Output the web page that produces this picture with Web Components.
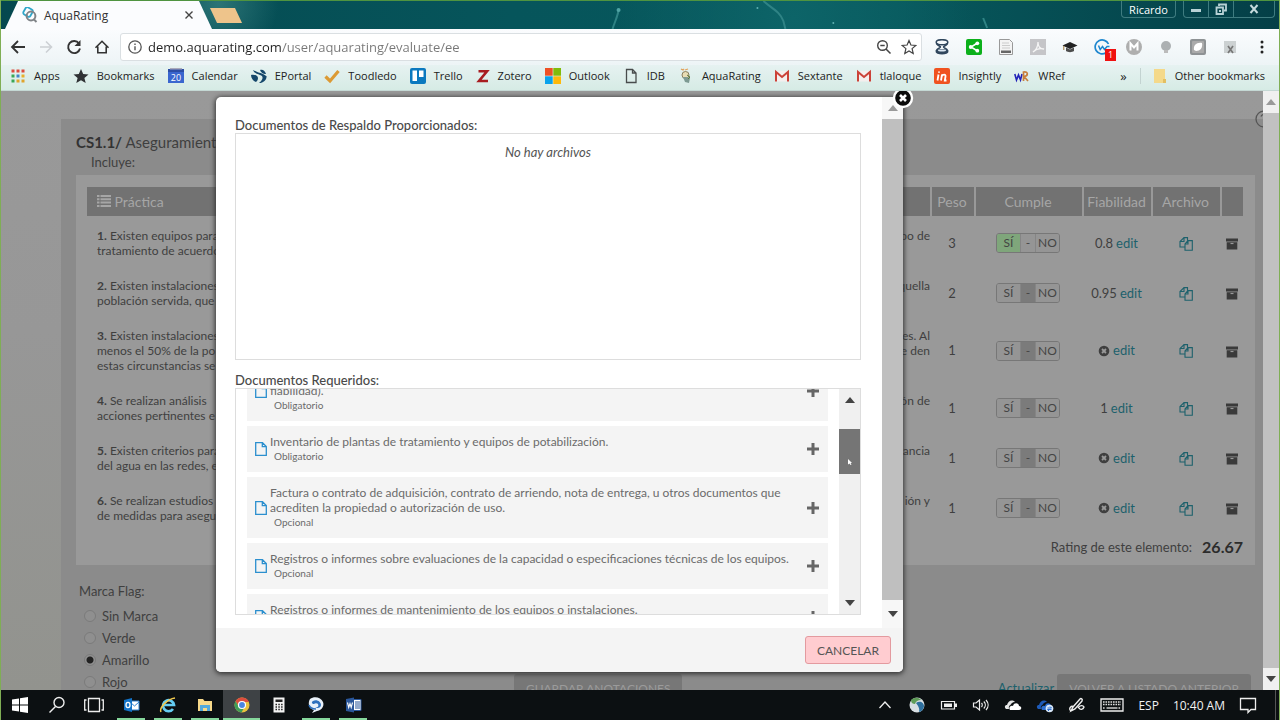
<!DOCTYPE html>
<html lang="es">
<head>
<meta charset="utf-8">
<title>AquaRating</title>
<style>
    html, body{
        width:100%;
        height:100%;
        margin:0px;
        overflow:hidden;
    }
</style>
</head>
<body>
<aqua-desktop></aqua-desktop>
<script>
(function(){

    // a bare * rule would win over the :host rules of nested elements,
    // so margins and padding are reset by tag
    const RESET = `
        *{ box-sizing:border-box; }
        h1, h2, h3, p, fieldset, legend, table, th, td, button, input{
            margin:0px;
            padding:0px;
            border:0px;
        }
        button, input{
            font:inherit;
            color:inherit;
            background:none;
        }
        a{ text-decoration:none; }
    `;

    class BaseElement extends HTMLElement{
        constructor(){
            super();
            const template = document.createElement('template');
            template.innerHTML = `<style>${RESET}${this.css()}</style>${this.html()}`;
            this.attachShadow({mode:'open'});
            this.shadowRoot.appendChild(template.content.cloneNode(true));
        }
        css(){ return ''; }
        html(){ return ''; }
    }

    /* ICONS: [viewBox, markup] */
    const ICONS = {
        aqua:['0 0 16 16','<rect x="2" y="1" width="8" height="8" rx="2" transform="rotate(30 6 5)" fill="none" stroke="#2fa6c9" stroke-width="1.8"/><circle cx="9" cy="9" r="4.4" fill="none" stroke="#808488" stroke-width="2"/><path d="M11.5 12l3 3" stroke="#808488" stroke-width="2"/>'],
        close:['0 0 16 16','<path d="M4.5 4.500l7 7M11.500 4.500l-7 7" stroke="#444" stroke-width="1.4"/>'],
        back:['0 0 16 16','<path d="M15 8H2.500M8 2L2 8l6 6" fill="none" stroke="#333" stroke-width="1.800"/>'],
        forward:['0 0 16 16','<path d="M2 8h11M8 2.500L13.500 8 8 13.500" fill="none" stroke="#ccd0d4" stroke-width="1.600"/>'],
        reload:['0 0 16 16','<path d="M13 4.500A6 6 0 1 0 14 9.500" fill="none" stroke="#333" stroke-width="1.900"/><path d="M14.500 1v6h-6z" fill="#333"/>'],
        home:['0 0 16 16','<path d="M1.500 8.800L8 2.300l6.500 6.500M3.800 7.500v6.300h8.400V7.500" fill="none" stroke="#333" stroke-width="1.600"/>'],
        info:['0 0 16 16','<circle cx="8" cy="8" r="6.200" fill="none" stroke="#555" stroke-width="1.300"/><path d="M8 7.200v4M8 4.500v1.500" stroke="#555" stroke-width="1.400"/>'],
        zoomout:['0 0 16 16','<circle cx="6.500" cy="6.500" r="4.800" fill="none" stroke="#444" stroke-width="1.400"/><path d="M4.300 6.500h4.400M10 10l4.500 4.500" stroke="#444" stroke-width="1.500"/>'],
        star:['0 0 16 16','<path d="M8 1.500l1.900 4.500 4.900.4-3.700 3.200 1.100 4.800L8 11.900l-4.200 2.500 1.100-4.800L1.200 6.400l4.900-.4z" fill="none" stroke="#444" stroke-width="1.200"/>'],
        starfill:['0 0 16 16','<path d="M8 1l2.200 5 5.300.4-4.100 3.500 1.300 5.200L8 12.200 3.300 15.100l1.300-5.200L.5 6.400 5.800 6z" fill="#2f3234"/>'],
        hourglass:['0 0 16 16','<g fill="none" stroke="#30465c" stroke-width="1.500"><ellipse cx="8" cy="3.200" rx="5.800" ry="2.500"/><path d="M2.500 4.500C4 7 6.500 7 6.500 8s-3 1-4.500 4M13.500 4.500C12 7 9.500 7 9.500 8s3 1 4.500 4"/></g><ellipse cx="8" cy="12.800" rx="6.500" ry="2.700" fill="#30465c"/><ellipse cx="8" cy="11.600" rx="4" ry="1" fill="#dbe7f2"/>'],
        share:['0 0 16 16','<rect width="16" height="16" rx="2" fill="#0cb01b"/><path d="M11.500 4L5 8l6.500 4" fill="none" stroke="#fff" stroke-width="1.500"/><g fill="#fff"><circle cx="11.300" cy="4.300" r="1.900"/><circle cx="4.700" cy="8" r="1.900"/><circle cx="11.300" cy="11.700" r="1.900"/></g>'],
        page:['0 0 16 16','<path d="M1.500.500h10l3 3v12h-13z" fill="#f4f4f4" stroke="#999"/><path d="M4 4h7M4 6.500h8M4 9h8" stroke="#ccc"/><rect x="3" y="11.500" width="10" height="2.500" fill="#666"/>'],
        pdf:['0 0 16 16','<rect width="16" height="16" fill="#c5c5c8"/><path d="M3 13c3-2 5-6 5-10 0 5 2 7 6 7-4-1-8 0-11 3z" fill="none" stroke="#f5f5f5" stroke-width="1.300"/>'],
        cap:['0 0 16 16','<path d="M.5 6.500L8 3l7.500 3.500L8 10z" fill="#222"/><path d="M4 8.500v3.500c2 1.500 6 1.500 8 0V8.500L8 10.500z" fill="#4d4d4d"/><path d="M1.800 7v4" stroke="#a07c3c"/>'],
        wchat:['0 0 16 16','<path d="M14.500 5A7 7 0 1 0 12 13.800" fill="none" stroke="#1f87cf" stroke-width="1.700"/><path d="M4.500 6.500l1.700 4L8.500 7.500l2 3L13 7.500h2.500" fill="none" stroke="#1f87cf" stroke-width="1.500"/>'],
        mcircle:['0 0 16 16','<circle cx="8" cy="8" r="8" fill="#aeaeae"/><path d="M4.500 11.500v-7L8 8.500l3.500-4v7" fill="none" stroke="#fff" stroke-width="2"/>'],
        bulb:['0 0 16 16','<circle cx="8" cy="7" r="5" fill="#acb0b2"/><path d="M6 11h4v3H6z" fill="#bbb"/>'],
        leaf:['0 0 16 16','<rect width="16" height="16" rx="2" fill="#8e9294"/><rect x="2" y="2" width="12" height="12" rx="1" fill="#aaa"/><path d="M4 11C3 6 7 3 12 4c1 5-2 8-6 8z" fill="#fff"/>'],
        xbox:['0 0 16 16','<rect x="2" y="2" width="12" height="12" fill="#ccd1d2"/><path d="M6 7l5 7M11 7l-5 7" stroke="#777" stroke-width="1.700"/>'],
        menu:['0 0 16 16','<g fill="#222"><circle cx="8" cy="3" r="1.500"/><circle cx="8" cy="8" r="1.500"/><circle cx="8" cy="13" r="1.500"/></g>'],
        apps:['0 0 16 16','<g><path d="M1.500 1.500h3v3h-3zM6.500 1.500h3v3h-3zM11.500 1.500h3v3h-3z" fill="#db4b3f"/><path d="M1.500 6.500h3v3h-3z" fill="#3aa757"/><path d="M6.500 6.500h3v3h-3z" fill="#4285c8"/><path d="M11.500 6.500h3v3h-3z" fill="#e8b02c"/><path d="M1.500 11.500h3v3h-3z" fill="#3aa757"/><path d="M6.500 11.500h3v3h-3zM11.500 11.500h3v3h-3z" fill="#e0a42c"/></g>'],
        calendar:['0 0 16 16','<path d="M0 2h16v13H0z" fill="#3a66cf"/><path d="M0 1h16v3H0z" fill="#2c4da5"/><path d="M2 0h12v1.500H2z" fill="#aab"/><text x="8" y="12.500" font-family="Open Sans, sans-serif" font-size="9" fill="#fff" text-anchor="middle">20</text>'],
        eportal:['0 0 16 16','<g fill="#15476b"><path d="M2 2c1 3 4 4 7 5 4 1 3 5-1 8 5 0 8-4 7.500-7-1 0-2-2-6-3C6 4 4 3 2 2z"/><path d="M9 2c3-1 5 1 6 4-2 .5-5-1-6-4zM0 7c2-1 7 0 7 3 0 2-1 3-2 4-3-1-5-4-5-7z"/></g>'],
        tick:['0 0 16 16','<path d="M1.500 8.500l4.500 4.500L14.500 3" fill="none" stroke="#dc9a34" stroke-width="3.200"/>'],
        trello:['0 0 16 16','<rect width="16" height="16" rx="2" fill="#0b79bf"/><path d="M2.500 2.500h4.500v10.500H2.500zM9 2.500h4.500v6.500H9z" fill="#fff"/>'],
        zotero:['0 0 14 16','<path d="M2.500 3.200h8.500L3 13h9" fill="none" stroke="#a81c20" stroke-width="2.600"/>'],
        ms:['0 0 16 16','<path d="M0 0h7.700v7.700H0z" fill="#ee5025"/><path d="M8.300 0H16v7.700H8.300z" fill="#80bb0a"/><path d="M0 8.300h7.700V16H0z" fill="#0aa2ec"/><path d="M8.300 8.300H16V16H8.300z" fill="#fdb90b"/>'],
        doc:['0 0 16 16','<path d="M3.500 1.500h6l3.500 3.500v9.500H3.500zM9.500 1.500V5H13" fill="none" stroke="#484c4c" stroke-width="1.300"/>'],
        person:['0 0 16 16','<path d="M3 1l2 1 1-1M7 2l3-1" stroke="#e3a45c" stroke-width="1.300"/><ellipse cx="7.500" cy="7" rx="3.500" ry="3.500" fill="#e8dcb4" stroke="#877c5c"/><path d="M5 9l2 5 4 1 1-5-4-1z" fill="#7d9a92"/><path d="M9 7l3 2-2 2" stroke="#5c7c3c" fill="none"/>'],
        gmail:['0 0 16 16','<path d="M1 3h14v10.500H1z" fill="#f4efee"/><path d="M2 13.500V4l6 5 6-5v9.500" fill="none" stroke="#cb4238" stroke-width="2"/>'],
        insightly:['0 0 16 16','<rect width="16" height="16" rx="2" fill="#f0521f"/><path d="M4.500 6.500l-1 6M5 3.500v1.200M7 12.500l1-6M7.700 8.500c1-2.300 4.300-2.500 3.800 0l-.7 4h1.700" fill="none" stroke="#fff" stroke-width="1.800"/>'],
        wref:['0 0 16 16','<path d="M.8 6l1.700 6L4.500 7l2 5L8 6" fill="none" stroke="#2323b8" stroke-width="1.600"/><path d="M9.500 13V4c5-1 5 4 .5 4.500l4 4.500" fill="none" stroke="#c87f3c" stroke-width="1.700"/>'],
        folder:['0 0 16 16','<path d="M2 1h11v14H2z" fill="#f4d98a"/><path d="M11 11h3v4h-3z" fill="#e3bf62"/>'],
        list:['0 0 14 12','<path d="M0 0h2.500v2H0zM3.500 0H14v2H3.500zM0 3.300h2.500v2H0zM3.500 3.300H14v2H3.500zM0 6.600h2.500v2H0zM3.500 6.600H14v2H3.500zM0 9.900h2.500v2H0zM3.500 9.900H14v2H3.500z" fill="currentColor"/>'],
        copy:['0 0 14 14','<path d="M5 3.500V.600h3.500v3M5 .600L1 4.500v5.500h4.500M1 4.500h4V.600M9 3.600h4.300v9.700H6V7zM6 7h3V3.600" fill="none" stroke="currentColor" stroke-width="1.100"/>'],
        archive:['0 0 12 12','<path d="M0 .500h12v3H0zM.700 4.200h10.600V11.500H.700z" fill="currentColor"/><path d="M4.500 5.500h3" stroke="#999" stroke-width="1.200"/>'],
        cross:['0 0 12 12','<circle cx="6" cy="6" r="5.300" fill="currentColor"/><path d="M4 4l4 4M8 4L4 8" stroke="#999" stroke-width="1.800"/>'],
        file:['0 0 12 14','<path d="M.7.700h6.800L11.300 4.500v8.800H.7zM7.300.700v4h4" fill="none" stroke="#2b8fce" stroke-width="1.300"/>'],
        plus:['0 0 12 12','<path d="M4.500 0h3v4.500H12v3H7.500V12h-3V7.500H0v-3h4.500z" fill="#666"/>'],
        badge:['0 0 22 22','<circle cx="11" cy="11" r="9" fill="#0b0b0b" stroke="#fff" stroke-width="2.400"/><path d="M8 8l6 6M14 8l-6 6" stroke="#fff" stroke-width="2.600"/>'],
        help:['0 0 18 18','<circle cx="9" cy="9" r="8" fill="none" stroke="#555" stroke-width="1.300"/><path d="M6 6.500c1-3 6-2.500 6 .5 0 2-3 2-3 4M9 13v1.500" fill="none" stroke="#555" stroke-width="1.300"/>'],
        up:['0 0 10 6','<path d="M5 0l5 6H0z" fill="currentColor"/>'],
        down:['0 0 10 6','<path d="M5 6L0 0h10z" fill="currentColor"/>'],
        cursor:['0 0 6 6','<path d="M1 0l4 4-1.500 0 1 1.500-1 .5-1-1.500-1.500 1z" fill="#fff"/>'],
        min:['0 0 16 16','<path d="M3 8h10v3H3z" fill="#b8d2d6"/>'],
        restore:['0 0 16 16','<path d="M6 5V3.500h7v6h-2M3.500 6.500h6.500v6.500H3.500z" fill="none" stroke="#b8d2d6" stroke-width="1.800"/><path d="M6 9h2v2H6z" fill="#b8d2d6"/>'],
        wclose:['0 0 16 16','<path d="M4.500 4l7 8M11.500 4l-7 8" stroke="#c4dadd" stroke-width="2"/>'],
        windows:['0 0 18 18','<path d="M1 3.500l7-1v6.100H1zM9 2.300L17 1v7.600H9zM1 9.500h7v6.100l-7-1zM9 9.500h8V17L9 15.800z" fill="#fff"/>'],
        search:['0 0 18 18','<circle cx="11" cy="6.500" r="5" fill="none" stroke="#eee" stroke-width="1.400"/><path d="M7.500 10.500L1.500 16.500" stroke="#eee" stroke-width="1.500"/>'],
        taskview:['0 0 20 18','<path d="M4.500 2.500h11v13h-11zM2.500 4H.7v10h1.800M17.500 4h1.800v10h-1.800" fill="none" stroke="#eee" stroke-width="1.300"/>'],
        outlook:['0 0 18 18','<path d="M8 5h9v9H8z" fill="#fff" stroke="#2b7fd0"/><path d="M8 6l4.500 4L17 6" fill="none" stroke="#2b7fd0"/><path d="M2 4l8-2v14l-8-2z" fill="#1273c8"/><ellipse cx="6" cy="9" rx="2" ry="2.600" fill="none" stroke="#fff" stroke-width="1.300"/>'],
        ie:['0 0 18 18','<path d="M14 13a5.500 5.500 0 1 1 1-4H5" fill="none" stroke="#65cdf3" stroke-width="2.700"/><path d="M2 16C0 12 8 3 16 2" fill="none" stroke="#f2c94d" stroke-width="1.500"/>'],
        explorer:['0 0 18 18','<path d="M2 3h5l1.500 2H16v10H2z" fill="#f7d98a"/><path d="M4 15V9h10v6h-3v-3H7v3z" fill="#52a9dc"/>'],
        chrome:['0 0 18 18','<circle cx="9" cy="9" r="7.500" fill="#e9c23d"/><path d="M2.500 5.300A7.500 7.500 0 0 1 16 6H9L6 10.500z" fill="#dc4d3e"/><path d="M2.500 5.300A7.500 7.500 0 0 0 8.500 16.500L11.500 11H6z" fill="#3f9d58"/><circle cx="9" cy="9" r="3.500" fill="#4a86e0" stroke="#fff" stroke-width="1.200"/>'],
        calc:['0 0 18 18','<path d="M3.500 1.500h11v15h-11z" fill="#f3f3f3"/><path d="M5.500 3.500h7v2.500h-7z" fill="#222"/><path d="M5.500 8.500h8M5.500 11h8M5.500 13.500h8" stroke="#222" stroke-width="1.300" stroke-dasharray="1.500 1.300"/>'],
        bird:['0 0 18 18','<path d="M3 3C7 0 14 1 16 6c2 5-3 9-6 9l-5 2 2-3C1 13 1 6 3 3z" fill="#e9f1f9"/><path d="M6 5c4-2 8 1 8 4s-4 4-6 2c3 1 4-1 3-3-1-1-3-1-4 0-2 0-3-2-1-3z" fill="#2f71bd"/><path d="M2 9c1 3 4 4 7 4" fill="none" stroke="#2f71bd" stroke-width="1.500"/>'],
        word:['0 0 18 18','<path d="M8 3.500h9v11H8z" fill="#fff" stroke="#2a5699"/><path d="M11 6h5M11 8h5M11 10h5M11 12h5" stroke="#2a5699"/><path d="M2 3l8-1.500v15L2 15z" fill="#2a5699"/><path d="M3.500 6.500L4.700 11.500 6 7.500l1.200 4L8.500 6.500" fill="none" stroke="#fff" stroke-width="1.100"/>'],
        chevron:['0 0 18 18','<path d="M3.500 12L9 6l5.500 6" fill="none" stroke="#eee" stroke-width="1.300"/>'],
        ball:['0 0 18 18','<circle cx="9" cy="9" r="7.500" fill="#d7dee2"/><path d="M3 4c3-3 8-3 10 0-3 0-5 1-6 4-2 0-4-1-4-4z" fill="#5f9c58"/><path d="M8 7c4-3 8 0 8 3s-3 6-5 6c1-4-1-6-3-9z" fill="#2e6f9e"/>'],
        battery:['0 0 18 18','<path d="M1.500 5.500h13v7.500h-13z" fill="none" stroke="#eee" stroke-width="1.200"/><path d="M4 7.500h8v3.500H4zM15 7.500h2v3.500h-2z" fill="#eee"/>'],
        volume:['0 0 18 18','<path d="M1.500 7h2.500l3.500-3v10L4 11H1.500z" fill="none" stroke="#eee" stroke-width="1.200"/><path d="M9.500 7c1 1 1 3 0 4M11.800 5.500c2 2 2 5 0 7M14 4c2.800 3 2.800 7 0 10" fill="none" stroke="#eee" stroke-width="1.200"/>'],
        cloud:['0 0 18 18','<path d="M6 14c-2-3 1-5 3-4 1-4 6-3 6 0 3 0 3 4 0 4z" fill="#fff"/><path d="M5 13H2c-2-2-1-4 1-4C4 5 8 3 11 6 8 6 7 8 6.500 9 5 9.500 4.500 11 5 13z" fill="#e6e6e6"/>'],
        onedrive:['0 0 18 18','<path d="M6 14c-2-3 1-5 3-4 1-4 6-3 6 0 3 0 3 4 0 4z" fill="#2d6fd0"/><path d="M5 13H2c-2-2-1-4 1-4C4 5 8 3 11 6 8 6 7 8 6.500 9 5 9.500 4.500 11 5 13z" fill="#1d5ab8"/><circle cx="13.500" cy="12.500" r="3.800" fill="#d9e8fa"/><path d="M11.500 12h4l-1.500-1.500M15.500 13.500h-4l1.500 1.500" fill="none" stroke="#2d6fd0" stroke-width="1"/>'],
        pen:['0 0 18 18','<path d="M3 15l2-4 7-8c1-1 3 0 2 2l-7 8zM3 15c-3-2 0-6 3-4M10 12c2-3 5-3 6-1-1 3-4 3-5 1" fill="none" stroke="#eee" stroke-width="1.400"/>'],
        keyboard:['0 0 24 18','<path d="M1 3h22v12H1z" fill="none" stroke="#eee" stroke-width="1.300"/><path d="M3 6h18M3 8.500h18M3 12h2.500M18.500 12H21" stroke="#ddd" stroke-width="1.300" stroke-dasharray="1.600 .9"/><path d="M6.500 12h11" stroke="#ddd" stroke-width="1.400"/>'],
        notice:['0 0 18 18','<path d="M1.500 2.500h15v11h-4.500L9 16.500V13.500H1.500z" fill="none" stroke="#eee" stroke-width="1.300"/>']
    };

    class AppIcon extends HTMLElement{
        constructor(){
            super();
            this.attachShadow({mode:'open'});
        }
        connectedCallback(){
            const [box, markup] = ICONS[this.getAttribute('name')];
            const [,, w, h] = box.split(' ');
            this.shadowRoot.innerHTML = `
            <style>
                :host{ display:inline-block; flex:none; width:${w}px; height:${h}px; }
                svg{ display:block; width:100%; height:100%; }
            </style>
            <svg viewBox="${box}" aria-hidden="true">${markup}</svg>`;
        }
    }

    /* SCROLL BAR: before / thumb / after are flex shares of the track */
    class ScrollBar extends BaseElement{
        css(){
            return `
            :host{
                display:flex;
                flex-direction:column;
                flex:none;
                width:var(--bar-width, 16px);
                background:var(--bar-track, #f0f0f0);
                color:#444;
            }
            .cap{
                display:flex;
                align-items:center;
                justify-content:center;
                height:var(--bar-end, 22px);
                width:100%;
            }
            .cap.top{ height:22px; color:var(--bar-up, #444); }
            .track{ display:flex; flex-direction:column; flex:1; }
            .thumb{ background:var(--bar-thumb, #c1c1c1); position:relative; }
            `;
        }
        html(){
            return `
            <button class="cap top" aria-label="Subir"><app-icon name="up"></app-icon></button>
            <div class="track"><div class="before"></div><div class="thumb"><slot></slot></div><div class="after"></div></div>
            <button class="cap" aria-label="Bajar"><app-icon name="down"></app-icon></button>`;
        }
        connectedCallback(){
            for(const part of ['before','thumb','after']){
                this.shadowRoot.querySelector('.' + part).style.flex = (this.getAttribute(part) || 0) + ' 0 0px';
            }
        }
    }

    class BrowserTabs extends BaseElement{
        css(){
            return `
            :host{
                display:flex;
                height:29px;
                padding-left:4px;
                border-top:1px solid #4f9440;
                background:
                    radial-gradient(circle at 17% 10%, #2b7476 0px, transparent 60px),
                    radial-gradient(circle at 62% 60%, #0d6468 0px, transparent 180px),
                    linear-gradient(90deg, #05484f, #06555b 40%, #07585c 70%, #043f47);
            }
            .tab{
                display:flex;
                align-items:center;
                width:207px;
                padding:0px 15px 0px 17px;
                background:#fbfcfe;
                clip-path:polygon(13px 0, 194px 0, 100% 100%, 0 100%);
                font-size:12px;
                color:#333;
            }
            .tab span{ flex:1; padding-left:6px; }
            .tab button{ height:16px; }
            .new{
                width:32px;
                height:15px;
                margin-top:7px;
                margin-left:-2px;
                background:#eec48b;
                clip-path:polygon(0 0, 25px 0, 100% 100%, 7px 100%);
            }
            .streaks{ flex:1; height:28px; min-width:0; }
            .streaks svg{ display:block; width:100%; height:100%; }
            .win{
                display:flex;
                height:17px;
                margin-right:4px;
                border:1px solid #3f7c80;
                border-top:0px;
                border-radius:0px 0px 4px 4px;
            }
            .win button{
                display:flex;
                align-items:center;
                justify-content:center;
                width:25px;
                border-left:1px solid #3f7c80;
            }
            .win button:first-child{ border:0px; width:24px; }
            .win button:last-child{ width:41px; }
            .user{
                width:55px;
                height:17px;
                margin-right:7px;
                border:1px solid #3f7c80;
                border-top:0px;
                border-radius:0px 0px 4px 4px;
                font-size:11px;
                line-height:15px;
                color:#fff;
            }
            `;
        }
        html(){
            return `
            <div class="tab"><app-icon name="aqua"></app-icon><span>AquaRating</span><button aria-label="Cerrar pestaña"><app-icon name="close"></app-icon></button></div>
            <button class="new" aria-label="Nueva pestaña"></button>
            <div class="streaks"><svg viewBox="0 0 880 28" preserveAspectRatio="none" aria-hidden="true">
                <path d="M377 9c-1 7-4 12-6 19M522 0c9 8 16 10 20 20l2 8M742 17l4 10" fill="none" stroke="#2f8385" stroke-width="2"/>
                <circle cx="377" cy="9" r="2" fill="#4fa3a3"/><circle cx="516" cy="7" r="1" fill="#5fb0b0"/>
                <circle cx="592" cy="22" r="1" fill="#5fb0b0"/></svg></div>
            <button class="user">Ricardo</button>
            <div class="win">
                <button aria-label="Minimizar"><app-icon name="min"></app-icon></button>
                <button aria-label="Restaurar"><app-icon name="restore"></app-icon></button>
                <button aria-label="Cerrar"><app-icon name="wclose"></app-icon></button>
            </div>`;
        }
    }

    class BrowserToolbar extends BaseElement{
        css(){
            return `
            :host{
                display:flex;
                align-items:center;
                gap:12px;
                height:36px;
                padding:0px 9px;
                background:linear-gradient(#fbfcfe, #edf4f6);
            }
            button{ display:flex; position:relative; }
            .omnibox{
                display:flex;
                align-items:center;
                gap:9px;
                flex:1;
                height:28px;
                margin-right:-2px;
                margin-left:-2px;
                padding:0px 4px 0px 6px;
                border:1px solid #dadfe2;
                border-radius:3px;
                background:#fff;
            }
            .omnibox input{
                flex:1;
                min-width:0;
                margin-left:-4px;
                outline:none;
                font-size:13px;
                color:#666;
                background:linear-gradient(90deg, #222 134px, #777 134px);
                -webkit-background-clip:text;
                background-clip:text;
                -webkit-text-fill-color:transparent;
            }
            .ext{ display:flex; gap:16px; margin-left:2px; }
            .count{
                position:absolute;
                left:11px;
                top:10px;
                width:11px;
                height:12px;
                background:#f01010;
                color:#fff;
                font-size:9px;
                line-height:12px;
                text-align:center;
            }
            `;
        }
        html(){
            const ext = ['hourglass','share','page','pdf','cap','wchat','mcircle','bulb','leaf','xbox','menu'];
            return `
            ${['back','forward','reload','home'].map(n => `<button aria-label="${n}"><app-icon name="${n}"></app-icon></button>`).join('')}
            <div class="omnibox">
                <app-icon name="info"></app-icon>
                <input type="text" aria-label="Dirección" value="demo.aquarating.com/user/aquarating/evaluate/ee">
                <button aria-label="Zoom"><app-icon name="zoomout"></app-icon></button>
                <button aria-label="Favorito"><app-icon name="star"></app-icon></button>
            </div>
            <div class="ext">${ext.map(n => `<button aria-label="${n}"><app-icon name="${n}"></app-icon>${n === 'wchat' ? '<span class="count">1</span>' : ''}</button>`).join('')}</div>`;
        }
    }

    class BookmarksBar extends BaseElement{
        css(){
            return `
            :host{
                display:flex;
                align-items:center;
                gap:13px;
                height:26px;
                padding:0px 14px 4px 9px;
                border-bottom:1px solid #c4d8d4;
                background:linear-gradient(#e6f2f1, #d6ebe5);
                font-size:11px;
                color:#222;
                white-space:nowrap;
            }
            a{ display:flex; align-items:center; gap:8px; color:inherit; }
            .more{ margin-left:auto; font-size:13px; }
            .other{ border-left:1px solid #c3d3d1; padding-left:11px; gap:7px; }
            `;
        }
        html(){
            const marks = [
                ['apps','Apps'],['starfill','Bookmarks'],['calendar','Calendar'],['eportal','EPortal'],
                ['tick','Toodledo'],['trello','Trello'],['zotero','Zotero'],['ms','Outlook'],['doc','IDB'],
                ['person','AquaRating'],['gmail','Sextante'],['gmail','tlaloque'],['insightly','Insightly'],['wref','WRef']
            ];
            return `
            ${marks.map(([icon, text]) => `<a href="#"><app-icon name="${icon}"></app-icon>${text}</a>`).join('')}
            <button class="more">»</button>
            <a class="other" href="#"><app-icon name="folder"></app-icon>Other bookmarks</a>`;
        }
    }

    class YesNo extends BaseElement{
        css(){
            return `
            :host{
                display:inline-flex;
                height:20px;
                border:1px solid #777;
                border-radius:3px;
                overflow:hidden;
                vertical-align:middle;
                font-size:12px;
                color:#444;
            }
            button{ width:23px; line-height:18px; background:#959595; }
            button.none{ width:16px; border-left:1px solid #858585; border-right:1px solid #858585; }
            :host([value="yes"]) .yes{ background:#7fa67b; }
            :host([value="none"]) .none{ background:#7b7b7b; }
            `;
        }
        html(){
            return '<button class="yes">SÍ</button><button class="none">-</button><button class="no">NO</button>';
        }
    }

    /* start and end of each line; the dialog covers the middle */
    const PRACTICES = [
        {lines:[['Existen equipos para','tipo de'],['tratamiento de acuerdo','']], weight:3, value:'yes', score:'0.8'},
        {lines:[['Existen instalaciones','aquella'],['población servida, que','']], weight:2, value:'none', score:'0.95'},
        {lines:[['Existen instalaciones','es. Al'],['menos el 50% de la po','que den'],['estas circunstancias se','']], weight:1, value:'none', score:''},
        {lines:[['Se realizan análisis','ión de'],['acciones pertinentes e','']], weight:1, value:'none', score:'1'},
        {lines:[['Existen criterios para','ancia'],['del agua en las redes, e','']], weight:1, value:'none', score:''},
        {lines:[['Se realizan estudios','ión y'],['de medidas para asegu','']], weight:1, value:'none', score:''}
    ];

    class PracticeTable extends BaseElement{
        css(){
            return `
            :host{ display:block; }
            table{
                width:100%;
                table-layout:fixed;
                border-collapse:collapse;
                font-size:12px;
                line-height:15px;
                color:#3f3f3f;
            }
            th{
                height:29px;
                background:#727272;
                color:#a6a6a6;
                font-size:14px;
                font-weight:400;
                box-shadow:inset 2px 0px #999;
            }
            th:first-child{ text-align:left; padding-left:10px; box-shadow:none; }
            td{ padding:10px 0px; text-align:center; font-size:13px; }
            tbody tr:first-child td{ padding-top:12px; }
            td:first-child{ padding-left:10px; font-size:12px; }
            .line{ display:flex; justify-content:space-between; }
            .score{ display:flex; align-items:center; justify-content:center; gap:3px; }
            a{ color:#1d616c; }
            td app-icon{ vertical-align:middle; }
            .archive{ color:#3a3a3a; }
            `;
        }
        html(){
            return `
            <table>
                <colgroup><col><col style="width:44px"><col style="width:108px"><col style="width:69px"><col style="width:69px"><col style="width:23px"></colgroup>
                <thead><tr>
                    <th><app-icon name="list"></app-icon> Práctica</th><th>Peso</th><th>Cumple</th><th>Fiabilidad</th><th>Archivo</th><th></th>
                </tr></thead>
                <tbody>${PRACTICES.map((p, i) => `
                <tr>
                    <td>${p.lines.map(([a, b], n) => `<div class="line"><span>${n ? '' : `<b>${i + 1}.</b> `}${a}</span><span>${b}</span></div>`).join('')}</td>
                    <td>${p.weight}</td>
                    <td><yes-no value="${p.value}"></yes-no></td>
                    <td><div class="score">${p.score ? `<span>${p.score}</span>` : '<app-icon name="cross"></app-icon>'}<a href="#">edit</a></div></td>
                    <td><a href="#" aria-label="Archivo"><app-icon name="copy"></app-icon></a></td>
                    <td class="archive"><app-icon name="archive"></app-icon></td>
                </tr>`).join('')}</tbody>
            </table>`;
        }
    }

    class EvaluatePage extends BaseElement{
        css(){
            return `
            :host{
                display:block;
                flex:1;
                min-width:0;
                overflow:hidden;
                padding:28px 0px 0px 60px;
                background:linear-gradient(#999, #979797 40%, #92938e);
                color:#3f3f3f;
            }
            .panel{ height:100%; padding:13px 8px 0px 15px; background:#8b8b8b; position:relative; }
            .help{ position:absolute; right:-10px; top:-9px; }
            h1{ font-size:15px; line-height:20px; font-weight:400; }
            h1 b{ color:#333; }
            h2{ font-size:13px; line-height:20px; font-weight:400; padding-left:15px; }
            .card{ margin-top:3px; padding:12px 12px 8px 11px; background:#999; }
            .rating{ display:flex; justify-content:flex-end; align-items:center; gap:10px; padding-top:4px; font-size:13px; line-height:20px; }
            .rating strong{ font-size:16px; color:#2c2c2c; }
            .below{ display:flex; align-items:flex-start; }
            fieldset{ flex:none; width:438px; padding:16px 0px 0px 3px; }
            legend{ float:left; width:100%; font-size:13px; line-height:20px; margin-bottom:4px; }
            fieldset label{ clear:both; display:flex; align-items:center; gap:6px; padding-left:5px; font-size:13px; line-height:22px; }
            fieldset input{ appearance:none; width:12px; height:12px; border:1px solid #7b7b7b; border-radius:50%; background:#8f8f8f; }
            fieldset input:checked{ background:radial-gradient(circle, #222 3px, #909090 4px); }
            .actions{ display:flex; flex:1; align-items:flex-start; gap:3px; padding:109px 4px 0px 0px; font-size:13px; }
            .actions button{ height:28px; padding:0px 12px; border-radius:3px; background:#777; color:#9b9b9b; font-size:12px; }
            .actions a{ margin-left:auto; line-height:28px; color:#1d616c; }
            `;
        }
        html(){
            return `
            <div class="panel">
                <app-icon class="help" name="help"></app-icon>
                <h1><b>CS1.1/</b> Aseguramiento</h1>
                <h2>Incluye:</h2>
                <div class="card">
                    <practice-table></practice-table>
                    <div class="rating">Rating de este elemento: <strong>26.67</strong></div>
                </div>
                <div class="below">
                    <fieldset>
                        <legend>Marca Flag:</legend>
                        <label><input type="radio" name="flag">Sin Marca</label>
                        <label><input type="radio" name="flag">Verde</label>
                        <label><input type="radio" name="flag" checked>Amarillo</label>
                        <label><input type="radio" name="flag">Rojo</label>
                    </fieldset>
                    <div class="actions">
                        <button>GUARDAR ANOTACIONES</button>
                        <a href="#">Actualizar</a>
                        <button>VOLVER A LISTADO ANTERIOR</button>
                    </div>
                </div>
            </div>`;
        }
    }

    class RequiredDoc extends BaseElement{
        css(){
            return `
            :host{
                display:flex;
                align-items:center;
                flex:none;
                gap:3px;
                padding:8px 9px 8px 8px;
                background:#f4f4f4;
                font-size:12px;
                line-height:15px;
                color:#6b6b6b;
            }
            .text{ flex:1; min-width:0; padding-right:8px; }
            .kind{ padding-left:4px; font-size:10px; }
            button{ display:flex; }
            `;
        }
        html(){
            return `
            <app-icon name="file"></app-icon>
            <div class="text"><div><slot></slot></div><div class="kind"><slot name="kind"></slot></div></div>
            <button aria-label="Añadir"><app-icon name="plus"></app-icon></button>`;
        }
    }

    class DocsDialog extends BaseElement{
        css(){
            return `
            :host{
                display:flex;
                flex-direction:column;
                border-radius:5px;
                background:#fff;
                box-shadow:0px 1px 5px 1px #333;
                color:#4a4a4a;
            }
            .main{ display:flex; flex:1; min-height:0; }
            .content{ display:flex; flex-direction:column; flex:1; min-width:0; padding:20px 21px 13px 19px; }
            h3{ font-size:13px; line-height:16px; font-weight:500; }
            h3.second{ margin-top:12px; }
            .box{ flex:1 1 0px; min-height:0; border:1px solid #ddd; }
            .empty{ padding-top:8px; text-align:center; font-size:13px; line-height:20px; font-style:italic; color:#555; }
            .scroller{ display:flex; }
            .list{
                display:flex;
                flex-direction:column;
                gap:5px;
                flex:1;
                min-width:0;
                padding:8px 11px;
                overflow-y:auto;
                scrollbar-width:none;
            }
            .side{ --bar-width:21px; --bar-end:28px; --bar-track:#f7f7f7; --bar-up:#999; --bar-thumb:#bfbfbf; border-radius:0px 5px 0px 0px; }
            .inner{ --bar-width:21px; --bar-thumb:#757575; }
            .cursor{ position:absolute; left:8px; top:30px; }
            footer{ display:flex; justify-content:flex-end; padding:8px 12px; background:#f4f4f4; border-radius:0px 0px 5px 5px; }
            footer button{ height:28px; padding:0px 11px; border:1px solid #e39a9f; border-radius:3px; background:#ffccd0; font-size:12px; color:#555; }
            .close{ position:absolute; right:-11px; top:-10px; display:flex; }
            `;
        }
        html(){
            return `
            <div class="main">
                <div class="content">
                    <h3>Documentos de Respaldo Proporcionados:</h3>
                    <div class="box"><p class="empty">No hay archivos</p></div>
                    <h3 class="second">Documentos Requeridos:</h3>
                    <div class="box scroller">
                        <div class="list">
                            <required-doc>Documentos de respaldo (inventario, registros de operación y<br>fiabilidad).<span slot="kind">Obligatorio</span></required-doc>
                            <required-doc>Inventario de plantas de tratamiento y equipos de potabilización.<span slot="kind">Obligatorio</span></required-doc>
                            <required-doc>Factura o contrato de adquisición, contrato de arriendo, nota de entrega, u otros documentos que acrediten la propiedad o autorización de uso.<span slot="kind">Opcional</span></required-doc>
                            <required-doc>Registros o informes sobre evaluaciones de la capacidad o especificaciones técnicas de los equipos.<span slot="kind">Opcional</span></required-doc>
                            <required-doc>Registros o informes de mantenimiento de los equipos o instalaciones.<span slot="kind">Opcional</span></required-doc>
                        </div>
                        <scroll-bar class="inner" before="18" thumb="45" after="118"><app-icon class="cursor" name="cursor"></app-icon></scroll-bar>
                    </div>
                </div>
                <scroll-bar class="side" before="0" thumb="1" after="0"></scroll-bar>
            </div>
            <footer><button>CANCELAR</button></footer>
            <button class="close" aria-label="Cerrar"><app-icon name="badge"></app-icon></button>`;
        }
        connectedCallback(){
            this.shadowRoot.querySelector('.list').scrollTop = 37;
        }
    }

    class TaskBar extends BaseElement{
        css(){
            return `
            :host{
                display:flex;
                height:30px;
                padding-right:3px;
                background:#0c1012;
                color:#f2f2f2;
                font-size:12px;
            }
            .app{ display:flex; align-items:center; justify-content:center; width:37px; background:linear-gradient(#86d89c, #86d89c) no-repeat center bottom / 0px 2px; }
            .app:first-child{ width:34px; }
            .app.open{ background-size:28px 2px; }
            .app.active{ background-color:#3e4245; background-size:37px 2px; }
            .tray{ display:flex; align-items:center; gap:14px; margin-left:auto; padding-right:18px; border-right:1px solid #555; }
            .tray button{ display:flex; }
            `;
        }
        html(){
            const apps = [
                ['windows',''],['search',''],['taskview',''],['outlook','open'],['ie','open'],['explorer','open'],
                ['chrome','active'],['calc',''],['bird','open'],['word','open']
            ];
            const tray = ['chevron','ball','battery','volume','cloud','onedrive','pen','keyboard'];
            return `
            ${apps.map(([n, state]) => `<button class="app ${state}" aria-label="${n}"><app-icon name="${n}"></app-icon></button>`).join('')}
            <div class="tray">
                ${tray.map(n => `<button aria-label="${n}"><app-icon name="${n}"></app-icon></button>`).join('')}
                <span>ESP</span><span>10:40 AM</span>
                <button aria-label="Notificaciones"><app-icon name="notice"></app-icon></button>
            </div>`;
        }
    }

    class AquaDesktop extends BaseElement{
        css(){
            return `
            :host{
                display:flex;
                flex-direction:column;
                height:100vh;
                border-left:1px solid #7fae55;
                border-right:1px solid #7fae55;
                box-sizing:border-box;
                font-family:"Open Sans", "Noto Sans", sans-serif;
            }
            .view{
                display:flex;
                flex:1;
                min-height:0;
                position:relative;
                overflow:hidden;
                font-family:Lato, "Noto Sans", sans-serif;
            }
            docs-dialog{ position:absolute; left:215px; right:376px; top:6px; bottom:18px; }
            .window{ --bar-up:#999; }
            `;
        }
        html(){
            return `
            <browser-tabs></browser-tabs>
            <browser-toolbar></browser-toolbar>
            <bookmarks-bar></bookmarks-bar>
            <div class="view">
                <evaluate-page></evaluate-page>
                <scroll-bar class="window" before="0" thumb="1" after="0"></scroll-bar>
                <docs-dialog></docs-dialog>
            </div>
            <task-bar></task-bar>`;
        }
    }

    customElements.define('app-icon',AppIcon);
    customElements.define('scroll-bar',ScrollBar);
    customElements.define('browser-tabs',BrowserTabs);
    customElements.define('browser-toolbar',BrowserToolbar);
    customElements.define('bookmarks-bar',BookmarksBar);
    customElements.define('yes-no',YesNo);
    customElements.define('practice-table',PracticeTable);
    customElements.define('evaluate-page',EvaluatePage);
    customElements.define('required-doc',RequiredDoc);
    customElements.define('docs-dialog',DocsDialog);
    customElements.define('task-bar',TaskBar);
    customElements.define('aqua-desktop',AquaDesktop);
})();
</script>
</body>
</html>
